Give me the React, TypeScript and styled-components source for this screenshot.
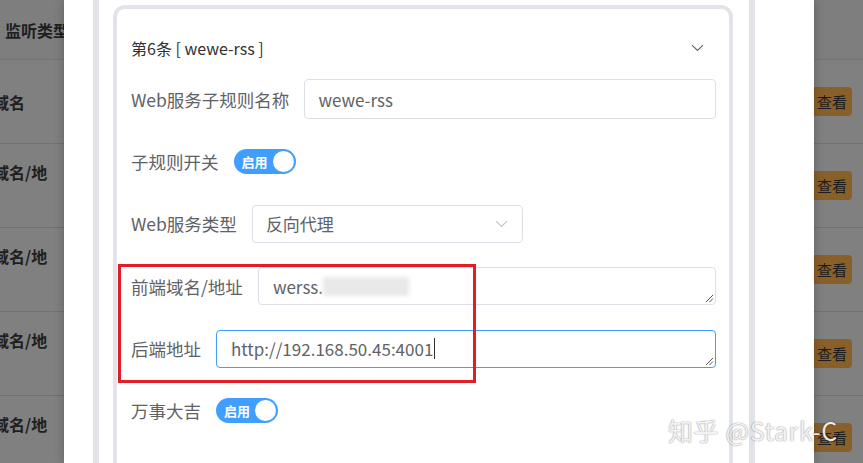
import styled, { createGlobalStyle } from "styled-components";

const GlobalStyle = createGlobalStyle`
  html, body {
    margin: 0;
    padding: 0;
    height: 100%;
  }
  body {
    font-family: "Noto Sans CJK SC", "Microsoft YaHei", sans-serif;
    overflow: hidden;
  }
  #root {
    height: 100%;
  }
`;

const Screen = styled.div`
  position: relative;
  width: 863px;
  height: 463px;
  overflow: hidden;
  background: #808080;
`;

/* dimmed list page behind the dialog */
const Backdrop = styled.div`
  display: grid;
  grid-template-rows: 60px repeat(5, 84px);
  height: 100%;
`;

const TableRow = styled.div<{ $head?: boolean }>`
  display: flex;
  justify-content: space-between;
  align-items: center;
  border-bottom: 1px solid #727272;
  background: ${(p) => (p.$head ? "#7e7e7f" : "#808080")};
`;

const Cell = styled.div<{ $indent: number; $lift?: number }>`
  width: 64px;
  overflow: hidden;
  white-space: nowrap;
  text-indent: ${(p) => p.$indent}px;
  margin-top: ${(p) => -(p.$lift ?? 0)}px;
  font-size: 16px;
  font-weight: 700;
  color: #1f1f1f;
`;

const ViewButton = styled.div`
  width: 60px;
  height: 29px;
  margin-right: 11px;
  display: flex;
  align-items: center;
  justify-content: flex-end;
  padding-right: 5px;
  box-sizing: border-box;
  border-radius: 4px;
  background: #89602a;
  font-size: 15px;
  color: #1c1c1c;
`;

const Modal = styled.div`
  position: absolute;
  top: 0;
  bottom: 0;
  left: 64px;
  width: 750px;
  box-sizing: border-box;
  padding: 0 59px 0 29px;
  background: #fff;
  box-shadow: 0 0 10px rgba(0, 0, 0, 0.25);
`;

const ScrollBox = styled.div`
  height: 100%;
  box-sizing: border-box;
  border-left: 6px solid #e1e3e8;
  border-right: 6px solid #e1e3e8;
  padding: 5px 16px 0 14px;
`;

const Card = styled.div`
  position: relative;
  height: 100%;
  box-sizing: border-box;
  border: 4px solid #e2e4e9;
  border-bottom: none;
  border-radius: 12px 12px 0 0;
  padding: 14px 13px 0 14px;
`;

const CardHeader = styled.div`
  height: 50px;
  margin-bottom: 6px;
  display: flex;
  align-items: center;
  justify-content: space-between;
  padding-right: 12px;
  font-size: 16px;
  color: #303133;
`;

const Form = styled.div`
  display: flex;
  flex-direction: column;
  gap: 22.4px;
`;

const FormRow = styled.div`
  display: flex;
  align-items: center;
  gap: 15px;
  min-height: 40px;
`;

const Label = styled.span`
  font-size: 17.5px;
  color: #606266;
  white-space: nowrap;
`;

const TextInput = styled.div`
  flex: 1;
  height: 40px;
  box-sizing: border-box;
  display: flex;
  align-items: center;
  padding: 0 13px;
  border: 1px solid #dcdfe6;
  border-radius: 4px;
  font-size: 17px;
  color: #606266;
`;

const Select = styled(TextInput)`
  flex: none;
  width: 271px;
  height: 38px;
  justify-content: space-between;
  padding-right: 14px;
`;

const TextBox = styled.div<{ $focused?: boolean }>`
  position: relative;
  flex: 1;
  height: 38px;
  box-sizing: border-box;
  display: flex;
  align-items: center;
  padding: 0 14px;
  border: 1px solid ${(p) => (p.$focused ? "#409eff" : "#dcdfe6")};
  border-radius: 4px;
  font-size: 17px;
  color: #606266;
`;

const ResizeGrip = styled.svg`
  position: absolute;
  right: 1px;
  bottom: 1px;
`;

const Redacted = styled.span`
  display: inline-block;
  width: 86px;
  height: 19px;
  margin-left: 0;
  background: #e9e9e9;
  filter: blur(2px);
`;

const Caret = styled.span`
  display: inline-block;
  width: 1px;
  height: 21px;
  margin-left: 1px;
  background: #303133;
`;

const Switch = styled.div`
  width: 62px;
  height: 25px;
  box-sizing: border-box;
  display: flex;
  align-items: center;
  justify-content: space-between;
  padding: 0 2px 0 8px;
  border-radius: 13px;
  background: #409eff;
  font-size: 13px;
  font-weight: 700;
  color: #fff;
`;

const Knob = styled.span`
  width: 21px;
  height: 21px;
  border-radius: 50%;
  background: #fff;
`;

const Highlight = styled.div`
  position: absolute;
  left: 1px;
  top: 255px;
  width: 358px;
  height: 119px;
  box-sizing: border-box;
  border: 3px solid #e11d27;
`;

const Watermark = styled.div`
  position: absolute;
  left: 668px;
  top: 412px;
  font-size: 25px;
  letter-spacing: 0.6px;
  color: rgba(255, 255, 255, 0.92);
  text-shadow: 0 0 1px rgba(0, 0, 0, 0.45), 0 0 2px rgba(0, 0, 0, 0.2);
  white-space: nowrap;
`;

function Chevron({ color }: { color: string }) {
  return (
    <svg width="13" height="8" viewBox="0 0 13 8" fill="none">
      <path d="M1 1.2 L6.5 6.5 L12 1.2" stroke={color} strokeWidth="1.1" />
    </svg>
  );
}

function Grip() {
  return (
    <ResizeGrip width="9" height="9" viewBox="0 0 9 9">
      <path d="M8 1 L1 8 M8 4.5 L4.5 8" stroke="#555" strokeWidth="1" />
    </ResizeGrip>
  );
}

function Toggle() {
  return (
    <Switch>
      启用
      <Knob />
    </Switch>
  );
}

const rows = [
  { text: "域名", lift: 0 },
  { text: "域名/地", lift: 28 },
  { text: "域名/地", lift: 28 },
  { text: "域名/地", lift: 28 },
  { text: "域名/地", lift: 28 },
];

export default function App() {
  return (
    <>
      <GlobalStyle />
      <Screen>
        <Backdrop>
          <TableRow $head>
            <Cell $indent={5}>监听类型</Cell>
          </TableRow>
          {rows.map((r, i) => (
            <TableRow key={i}>
              <Cell $indent={-7} $lift={r.lift}>
                {r.text}
              </Cell>
              <ViewButton>查看</ViewButton>
            </TableRow>
          ))}
        </Backdrop>

        <Modal>
          <ScrollBox>
            <Card>
              <CardHeader>
                <span>第6条 [ wewe-rss ]</span>
                <Chevron color="#606266" />
              </CardHeader>
              <Form>
                <FormRow>
                  <Label>Web服务子规则名称</Label>
                  <TextInput>wewe-rss</TextInput>
                </FormRow>
                <FormRow>
                  <Label>子规则开关</Label>
                  <Toggle />
                </FormRow>
                <FormRow>
                  <Label>Web服务类型</Label>
                  <Select>
                    反向代理
                    <Chevron color="#c0c4cc" />
                  </Select>
                </FormRow>
                <FormRow>
                  <Label>前端域名/地址</Label>
                  <TextBox>
                    werss.
                    <Redacted />
                    <Grip />
                  </TextBox>
                </FormRow>
                <FormRow>
                  <Label>后端地址</Label>
                  <TextBox $focused>
                    http://192.168.50.45:4001
                    <Caret />
                    <Grip />
                  </TextBox>
                </FormRow>
                <FormRow>
                  <Label>万事大吉</Label>
                  <Toggle />
                </FormRow>
              </Form>
              <Highlight />
            </Card>
          </ScrollBox>
        </Modal>

        <Watermark>知乎 @Stark-C</Watermark>
      </Screen>
    </>
  );
}
